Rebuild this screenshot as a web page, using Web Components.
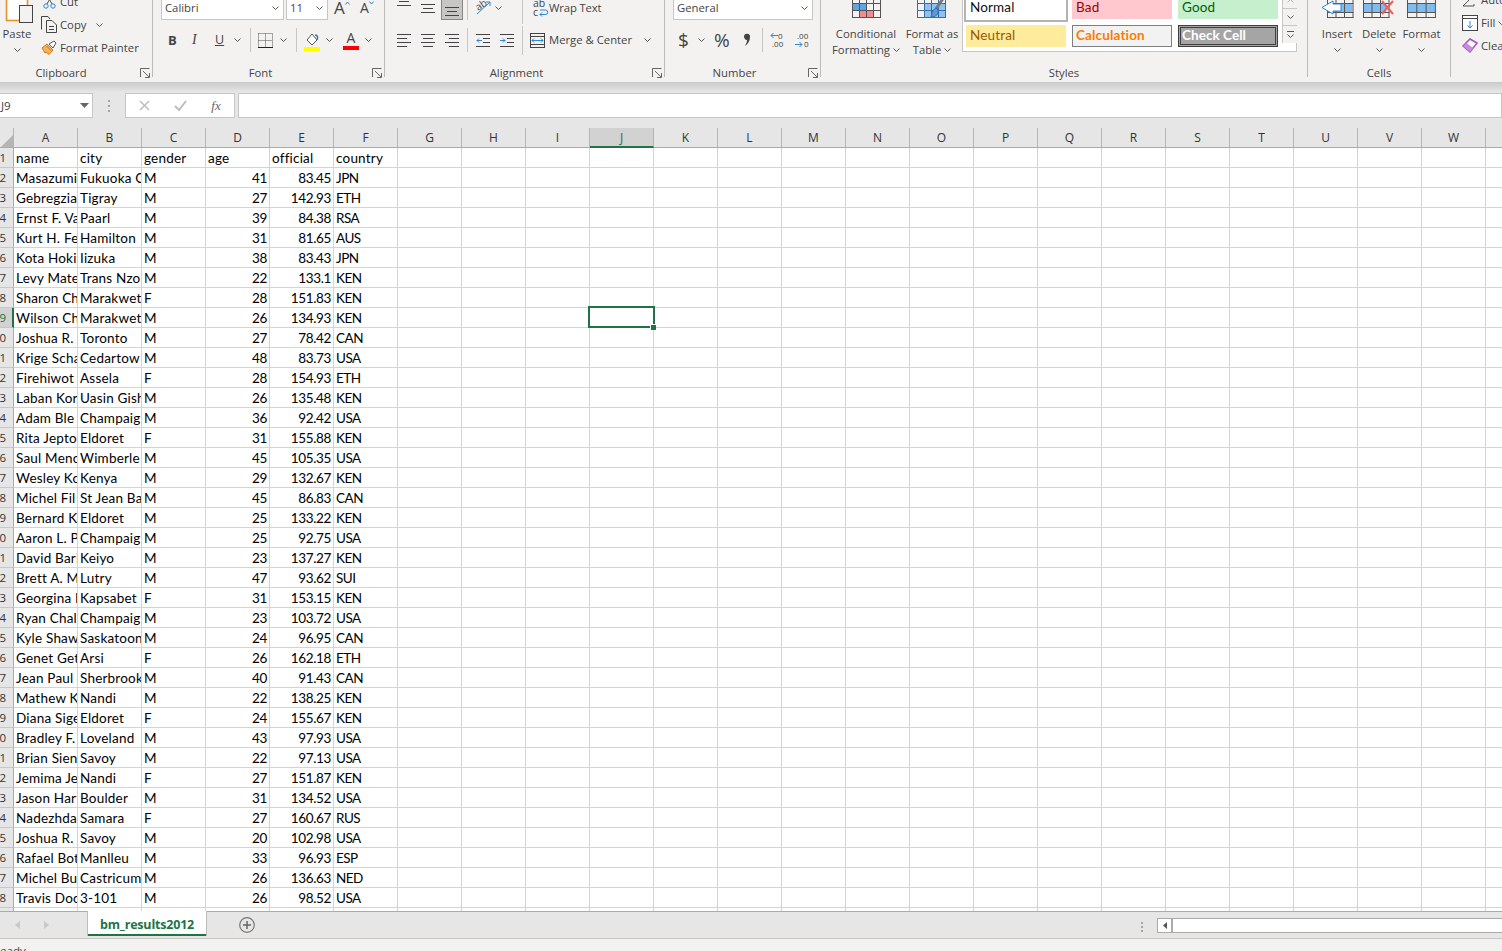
<!DOCTYPE html>
<html lang="en"><head><meta charset="utf-8"><title>bm_results2012</title>
<style>html,body{margin:0;padding:0;background:#fff;overflow:hidden}</style></head>
<body><x-app></x-app>
<script>
const s=(w,h,inner,st='')=>`<svg width="${w}" height="${h}" viewBox="0 0 ${w} ${h}" style="display:block;flex:none;overflow:visible;${st}">${inner}</svg>`;
const chev=s(7,4,'<path d="M.5.5 3.5 3.5 6.5.5" fill="none" stroke="#555"/>');
function row(start,items,cls='row',style=''){let p=start;return `<div class="${cls}" style="${style}">`+items.map(([x,w,h,st=''])=>{const m=x-p;p=x+w;return `<span class="i" style="margin-left:${m}px;width:${w}px;${st}">${h}</span>`}).join('')+`</div>`}
const lines=(arr)=>arr.map(([x1,x2,y])=>`<path d="M${x1} ${y}.5H${x2}" stroke="#444"/>`).join('');
const gridIc=(w,cols,rowsY,cw,extra='',stroke='#555')=>{let o='';for(let i=0;i<=cols;i++)o+=`<path d="M${i*cw+.5} ${rowsY[0]}V${rowsY[rowsY.length-1]+1}" stroke="${stroke}"/>`;rowsY.forEach(y=>o+=`<path d="M0 ${y+.5}H${cols*cw+1}" stroke="${stroke}"/>`);return o+extra};

class XGroup extends HTMLElement{
  constructor(){super();const r=this.attachShadow({mode:'open'});
    const lm=this.getAttribute('lm')||0,launch=this.hasAttribute('launcher');
    r.innerHTML=`<style>
    :host{display:flex;flex-direction:column;flex:none;height:82px;box-sizing:border-box;background:linear-gradient(#bdbbb9,#bdbbb9) right top/1px 77px no-repeat;overflow:hidden}
    .body{height:64px;flex:none;display:flex;flex-direction:column;justify-content:flex-end;overflow:hidden}
    .foot{height:18px;display:flex;align-items:center;padding-right:1px}
    .label{flex:1;text-align:center;margin-left:${lm}px;padding-right:${launch?4:0}px;line-height:18px;color:#444}
    svg{display:block;margin-right:2px;flex:none}
    </style><div class="body"><slot></slot></div><div class="foot"><div class="label">${this.getAttribute('label')}</div>${launch?`<svg width="10" height="10" viewBox="0 0 10 10"><path d="M.5 9V.5H9.5M3 3 9 9M5 9.500H9.500V5" fill="none" stroke="#666"/></svg>`:''}</div>`;
  }
}
customElements.define('x-group',XGroup);

class XChip extends HTMLElement{
  constructor(){super();const r=this.attachShadow({mode:'open'});
    r.innerHTML=`<style>:host{display:flex;align-items:center;box-sizing:border-box;font:13.5px/18px Lato,"Liberation Sans",sans-serif;padding-left:4px;padding-bottom:2px;overflow:hidden;white-space:nowrap;letter-spacing:.15px}</style><slot></slot>`;
  }
}
customElements.define('x-chip',XChip);

class XRibbon extends HTMLElement{
  constructor(){super();const r=this.attachShadow({mode:'open'});
    const clip=`<x-group label="Clipboard" launcher lm="-14" style="width:153px">`+
      row(0,[
        [2,30,`<div class="col" style="width:30px">${s(30,30,`<rect x="4.500" y=".5" width="21" height="27" fill="#fff" stroke="#e8912d" stroke-width="1.600"/><path d="M11 6.500H23" stroke="#666"/><rect x="17.500" y="12.500" width="13" height="17" fill="#f3f2f1" stroke="#444"/>`)}<div style="margin-top:3px;line-height:16px">Paste</div><div style="height:16px;display:flex;align-items:center">${chev}</div></div>`],
        [41,110,`<div class="stack" style="margin-bottom:-1px">
          <div class="l">${s(16,16,`<circle cx="5" cy="12" r="2.200" fill="none" stroke="#2b88d8"/><circle cx="12" cy="12" r="2.200" fill="none" stroke="#2b88d8"/><path d="M6 10 11 1M11 10 6 1" stroke="#555" fill="none"/>`)}<span style="margin-left:3px">Cut</span></div>
          <div class="l">${s(16,17,`<path d="M.5 13.500V.5H7L9 3" fill="none" stroke="#444"/><path d="M5.500 4.500H11L15.500 9V16.500H5.500Z" fill="#f3f2f1" stroke="#444"/><path d="M8 10.500H13M8 13.500H13" stroke="#444"/>`)}<span style="margin-left:3px">Copy</span><span style="margin-left:10px">${chev}</span></div>
          <div class="l">${s(16,15,`<path d="M1 8 6 4 12 10 8 14.500 5 12 4 13Z" fill="#f2b15e" stroke="#d67a12"/><path d="M8 4 13 1 15 3 12 8Z" fill="#fff" stroke="#555"/><path d="M5.500 6 10 10.500" stroke="#d67a12"/>`)}<span style="margin-left:3px">Format Painter</span></div>
        </div>`]
      ],'row big')+`</x-group>`;

    const font=`<x-group label="Font" launcher style="width:232px">`+
      row(153,[
        [161,123,`<span class="comb"><span>Calibri</span>${chev}</span>`],
        [286,42,`<span class="comb" style="color:#5c2d91"><span>11</span>${chev}</span>`],
        [334,18,`<span style="font-size:17px;line-height:20px">A</span>${s(5,4,'<path d="M.5 3.500 2.500 1 4.500 3.500" fill="none" stroke="#2b88d8"/>','margin-top:-10px')}`],
        [360,17,`<span style="font-size:14px;line-height:20px">A</span>${s(5,4,'<path d="M.5.5 2.500 3 4.500.5" fill="none" stroke="#2b88d8"/>','margin-top:-10px')}`]
      ])+
      row(153,[
        [168,9,`<b style="font-size:13px;color:#444">B</b>`],
        [192,7,`<i style="font-family:'Liberation Serif',serif;font-size:14px">I</i>`],
        [215,9,`<span style="text-decoration:underline;font-size:12.500px">U</span>`],
        [234,7,chev],
        [250,1,`<span class="sep"></span>`],
        [258,15,s(15,15,`<path d="M.5.5H14.500M.5 7.500H14.500M.5.5V14M7.500.5V14M14.500.5V14" stroke="#555" stroke-dasharray="1 1" fill="none"/><path d="M0 14.500H15" stroke="#222"/>`)],
        [280,7,chev],
        [296,1,`<span class="sep"></span>`],
        [304,16,s(16,19,`<path d="M3 8 8 2 13 8 8 13Z" fill="#fff" stroke="#555"/><path d="M11 3C14 3 14 6 13 8" fill="none" stroke="#2b78c2" stroke-width="1.500"/><rect y="15" width="16" height="4" fill="#ff0"/>`,'margin-top:3px')],
        [326,7,chev],
        [343,16,`<span class="col" style="width:16px"><span style="font-size:14px;line-height:14px;height:14px">A</span><span style="width:16px;height:4px;background:#f00;margin-top:1px"></span></span>`,'margin-top:1px'],
        [365,7,chev]
      ])+`</x-group>`;

    const al=(type,yy=[0,4,8,12],w=14)=>{const short={l:[0,10],c:[2,12],r:[4,14]}[type];return s(w,13,yy.map((y,i)=>`<path d="M${i%2?short[0]:0} ${y}.5H${i%2?short[1]:w}" stroke="#444"/>`).join(''))};
    const align=`<x-group label="Alignment" launcher style="width:280px">`+
      row(385,[
        [397,14,s(14,12,lines([[0,14,0],[2,12,4],[0,14,8]]),'margin-top:-10px')],
        [421,14,s(14,12,lines([[0,14,2],[2,12,6],[0,14,10]]))],
        [441,22,`<span class="sel">${s(14,9,lines([[0,14,0],[2,12,4],[0,14,8]]))}</span>`],
        [467,1,`<span class="sep"></span>`],
        [475,17,s(17,17,`<text x="2" y="9" transform="rotate(-35 6 8)" font-size="10" fill="#444" font-family="Open Sans">ab</text><path d="M2 14 15 2M11 2H15V6" fill="none" stroke="#2b88d8"/>`)],
        [495,7,chev],
        [522,1,`<span class="sep" style="height:32px"></span>`],
        [533,68,`<span style="display:block;width:12px;height:18px;flex:none;line-height:9px;font-size:10.500px;white-space:pre">ab
c</span>${s(9,8,'<path d="M1 2H6.500A2 2 0 0 1 6.500 6.500H1M3 4.500 1 6.500 3 8.500" fill="none" stroke="#2b88d8"/>','margin:7px 0 0 -6px')}<span style="margin-left:1px;letter-spacing:-.15px">Wrap Text</span>`]
      ])+
      row(385,[
        [397,14,al('l')],[421,14,al('c')],[445,14,al('r')],
        [467,1,`<span class="sep"></span>`],
        [476,14,s(14,13,`<path d="M0 .5H14M7 4.500H14M7 8.500H14M0 12.500H14" stroke="#444"/><path d="M6 6.500H1M3 4.500 1 6.500 3 8.500" fill="none" stroke="#2b88d8"/>`)],
        [500,14,s(14,13,`<path d="M0 .5H14M7 4.500H14M7 8.500H14M0 12.500H14" stroke="#444"/><path d="M0 6.500H5M3 4.500 5 6.500 3 8.500" fill="none" stroke="#2b88d8"/>`)],
        [522,1,`<span class="sep" style="align-self:flex-start;height:29px"></span>`],
        [530,15,s(15,15,`<rect x=".5" y=".5" width="14" height="14" fill="none" stroke="#444"/><path d="M0 3.500H15M0 11.500H15" stroke="#444"/><path d="M2 7.500H13M4 5.500 2 7.500 4 9.500M11 5.500 13 7.500 11 9.500" fill="none" stroke="#2b88d8"/>`)],
        [549,85,`<span>Merge &amp; Center</span>`],
        [644,7,chev]
      ])+`</x-group>`;

    const num=`<x-group label="Number" launcher style="width:156px">`+
      row(665,[[673,140,`<span class="comb"><span>General</span>${chev}</span>`]])+
      row(665,[
        [678,11,`<span style="font-size:19px;line-height:20px">$</span>`],
        [698,7,chev],
        [714,18,`<span style="font-size:19px;line-height:20px">%</span>`],
        [743,8,s(8,14,`<path d="M1 3.500A3 3 0 1 1 7 4C7 8 5 11 2 13 3.500 10 4 9 4 7 2 7 1 5 1 3.500Z" fill="#444"/>`)],
        [762,1,`<span class="sep"></span>`],
        [770,16,s(16,16,`<text x="8" y="7" font-size="8" fill="#444" font-family="Open Sans">0</text><text x="2" y="15" font-size="8" fill="#444" font-family="Open Sans">.00</text><path d="M8 3.500H1M3.500 1 1 3.500 3.500 6" fill="none" stroke="#2b88d8"/>`)],
        [794,16,s(16,16,`<text x="3" y="7" font-size="8" fill="#444" font-family="Open Sans">.00</text><text x="10" y="15" font-size="8" fill="#444" font-family="Open Sans">0</text><path d="M1 12.500H8M5.500 10 8 12.500 5.500 15" fill="none" stroke="#2b88d8"/>`)]
      ])+`</x-group>`;

    const big=(ic,a,b,ch=true)=>`<div class="col" style="width:100%">${ic}<div style="margin-top:8px;line-height:16px;white-space:nowrap">${a}</div><div style="height:16px;line-height:16px;display:flex;align-items:center;gap:3px;white-space:nowrap">${b}${ch?chev:''}</div></div>`;
    const rows=[2,9,16,23];
    const condIc=s(29,24,`<rect x="7" y="-4" width="14" height="6" fill="#f38b8f"/><rect x="1" y="9" width="14" height="7" fill="#5ea4e6"/><rect x="8" y="16" width="14" height="7" fill="#f38b8f"/>`+gridIc(29,4,rows,7));
    const tblIc=s(31,24,`<rect x="7" y="9" width="21" height="14" fill="#8cc1f0"/>`+gridIc(29,4,rows,7,'','#3a6ea5')+`<path d="M29 0 19 15" stroke="#777" stroke-width="3"/><path d="M19 14C15 16 15 20 14 23 19 23 22 20 21 16Z" fill="#5b9bd5" stroke="#2b6cb0"/>`);
    const insIc=s(32,24,`<rect x="7" y="9" width="24" height="9" fill="#7fbcf0"/>`+`<g transform="translate(6 0)">`+gridIc(26,3,[2,9,18,23],8.500,'','#555')+`</g>`+`<path d="M12 7 1 13.500 12 20V17H20V10H12Z" fill="#fff" stroke="#2b88d8"/>`);
    const delIc=s(32,24,`<rect x="1" y="9" width="22" height="9" fill="#7fbcf0"/>`+gridIc(26,3,[2,9,18,23],8.500,'','#555')+`<path d="M19 7 30 20M30 7 19 20" stroke="#e8615e" stroke-width="2"/>`);
    const fmtIc=s(29,24,`<rect x="1" y="9" width="27" height="9" fill="#7fbcf0"/>`+gridIc(29,3,[2,9,18,23],9.300,'','#555'));
    const styles=`<x-group label="Styles" style="width:487px">`+
      row(821,[
        [826,80,big(condIc,'Conditional','Formatting')],
        [906,52,big(tblIc,'Format as','Table')],
        [962,335,`<div class="gallery">
          <div class="chips">
            <x-chip style="margin:0 -2px 1px;border:2px solid #b3b3b3;background:#fff;padding-bottom:4px;color:#111;height:26px;width:104px;align-self:end">Normal</x-chip>
            <x-chip style="background:#ffc7ce;color:#9c0006;height:21px;margin-bottom:4px;align-self:end;padding-bottom:3px">Bad</x-chip>
            <x-chip style="background:#c6efce;color:#006100;height:21px;margin-bottom:4px;align-self:end;padding-bottom:3px">Good</x-chip>
            <x-chip style="background:#ffeb9c;color:#9c5700;height:22px">Neutral</x-chip>
            <x-chip style="background:#f2f2f2;color:#fa7d00;border:1px solid #7f7f7f;font-weight:700;height:22px;padding-left:3px">Calculation</x-chip>
            <x-chip style="background:#a5a5a5;color:#fff;border:3px double #3f3f3f;font-weight:700;height:22px;padding-left:1px;padding-bottom:2px;letter-spacing:.05px">Check Cell</x-chip>
          </div>
          <div class="gs">
            <span style="height:16px">${s(7,4,'<path d="M.5 3.500 3.500.5 6.500 3.500" fill="none" stroke="#bbb"/>')}</span>
            <span style="height:17px">${chev}</span>
            <span style="height:17px;flex-direction:column;gap:2px;border-bottom:0">${s(7,1,'<path d="M0 .5H7" stroke="#555"/>')}${chev}</span>
          </div>
        </div>`,'margin-bottom:6px;align-self:flex-end']
      ],'row big')+`</x-group>`;

    const cells=`<x-group label="Cells" style="width:143px">`+
      row(1308,[
        [1321,32,big(insIc,'Insert','',true)],
        [1363,32,big(delIc,'Delete','',true)],
        [1407,29,big(fmtIc,'Format','',true)]
      ],'row big')+`</x-group>`;

    const edit=`<x-group label="" style="flex:1;min-width:60px;background:none">`+
      row(1451,[[1462,60,`<div class="stack" style="margin-bottom:1px">
        <div class="l">${s(16,14,'<path d="M1 1H12V3M1 1 7 7 1 13H12V11" fill="none" stroke="#555"/>')}<span style="margin-left:3px">AutoSum</span></div>
        <div class="l">${s(16,16,'<rect x=".5" y=".5" width="15" height="15" fill="#fff" stroke="#444"/><path d="M0 3.500H16" stroke="#444"/><path d="M8 6V13M5.500 10.500 8 13 10.500 10.500" fill="none" stroke="#2b88d8"/>')}<span style="margin-left:3px">Fill</span><span style="margin-left:3px">${chev}</span></div>
        <div class="l">${s(16,15,'<path d="M1 8 8 1 15 5 8 14Z" fill="#fff" stroke="#a64dbf" stroke-width="1.500"/><path d="M1 8 8 14 11 10 4.500 5Z" fill="#c78adf"/>')}<span style="margin-left:3px">Clear</span></div>
      </div>`]],'row big')+`</x-group>`;

    r.innerHTML=`<style>
    :host{display:flex;height:82px;flex:none;background:#f3f2f1;overflow:hidden;font:11.300px/16px "Open Sans","Liberation Sans",sans-serif;color:#444}
    .row{display:flex;align-items:center;height:32px;flex:none}
    .row+.row{margin-bottom:8px}
    .row.big{height:64px;align-items:flex-end;padding-bottom:6px;box-sizing:border-box}
    .i{display:flex;align-items:center;flex:none;white-space:nowrap}
    .col{display:flex;flex-direction:column;align-items:center;flex:none}
    .stack{display:flex;flex-direction:column}
    .l{display:flex;align-items:center;height:23px;white-space:nowrap}
    .comb{display:flex;align-items:center;justify-content:space-between;box-sizing:border-box;width:100%;height:24px;background:#fff;border:1px solid #c8c6c4;padding:0 4px 0 3px;color:#444}
    .sep{display:block;width:1px;height:24px;background:#c8c6c4;flex:none}
    .sel{display:flex;align-items:flex-end;justify-content:center;box-sizing:border-box;width:22px;height:24px;background:#c8c6c4;border:1px solid #8a8886;padding-bottom:3px}
    .gallery{display:flex;background:#fff;border:1px solid #c8c6c4;box-sizing:border-box;width:335px;height:60px;padding-left:3px;align-self:flex-end;margin-top:-8px}
    .chips{display:grid;grid-template-columns:100px 100px 100px;column-gap:6px;grid-template-rows:1fr 22px;row-gap:2px;padding-bottom:4px;width:312px;flex:none}
    .gs{display:flex;flex-direction:column;width:15px;margin-left:4px;flex:none;box-sizing:border-box}
    .gs span{display:flex;align-items:center;justify-content:center;box-sizing:border-box;border:1px solid #c8c6c4;border-top:0;border-right:0;background:#f3f2f1}
    </style>${clip}${font}${align}${num}${styles}${cells}${edit}`;
  }
}
customElements.define('x-ribbon',XRibbon);

class XFormula extends HTMLElement{
  constructor(){super();const r=this.attachShadow({mode:'open'});
    r.innerHTML=`<style>
    :host{display:block;height:46px;flex:none;background:linear-gradient(#c9c9c9,#e6e6e6 10px);box-sizing:border-box;padding-top:11px;font:11.500px "Open Sans","Liberation Sans",sans-serif;color:#444}
    .b{display:flex;height:25px;align-items:stretch}
    .box{background:#fff;border:1px solid #c6c6c6;box-sizing:border-box;display:flex;align-items:center;flex:none}
    .name{width:93px;border-left:0;justify-content:space-between;padding-right:3px}
    .dots{width:32px;display:flex;flex-direction:column;align-items:center;justify-content:center;gap:3px;flex:none}
    .dots i{width:2px;height:2px;background:#a6a6a6}
    .fx{width:110px;margin-right:3px}
    .fx span{display:flex;justify-content:center;flex:none}
    .in{flex:1}
    </style><div class="b">
      <div class="box name"><span style="margin-left:1px">J9</span>${s(9,5,'<path d="M0 0H9L4.500 5Z" fill="#666"/>')}</div>
      <div class="dots"><i></i><i></i><i></i></div>
      <div class="box fx">
        <span style="width:36px">${s(11,11,'<path d="M1 1 10 10M10 1 1 10" stroke="#bdbdbd" stroke-width="1.500"/>')}</span>
        <span style="width:36px">${s(13,11,'<path d="M1 6 5 10 12 1" fill="none" stroke="#bdbdbd" stroke-width="2"/>')}</span>
        <span style="width:36px;font:italic 13px 'Liberation Serif',serif;color:#666">fx</span>
      </div>
      <div class="box in"></div>
    </div>`;
  }
}
customElements.define('x-formula',XFormula);

const DATA=`name|city|gender|age|official|country
Masazumi|Fukuoka C|M|41|83.45|JPN
Gebregzia|Tigray|M|27|142.93|ETH
Ernst F. Va|Paarl|M|39|84.38|RSA
Kurt H. Fe|Hamilton|M|31|81.65|AUS
Kota Hoki|Iizuka|M|38|83.43|JPN
Levy Mate|Trans Nzo|M|22|133.1|KEN
Sharon Ch|Marakwet|F|28|151.83|KEN
Wilson Ch|Marakwet|M|26|134.93|KEN
Joshua R.|Toronto|M|27|78.42|CAN
Krige Scha|Cedartow|M|48|83.73|USA
Firehiwot|Assela|F|28|154.93|ETH
Laban Kor|Uasin Gish|M|26|135.48|KEN
Adam Ble|Champaig|M|36|92.42|USA
Rita Jepto|Eldoret|F|31|155.88|KEN
Saul Menc|Wimberle|M|45|105.35|USA
Wesley Kc|Kenya|M|29|132.67|KEN
Michel Fil|St Jean Ba|M|45|86.83|CAN
Bernard K|Eldoret|M|25|133.22|KEN
Aaron L. P|Champaig|M|25|92.75|USA
David Bari|Keiyo|M|23|137.27|KEN
Brett A. M|Lutry|M|47|93.62|SUI
Georgina I|Kapsabet|F|31|153.15|KEN
Ryan Chal|Champaig|M|23|103.72|USA
Kyle Shaw|Saskatoon|M|24|96.95|CAN
Genet Get|Arsi|F|26|162.18|ETH
Jean Paul|Sherbrook|M|40|91.43|CAN
Mathew K|Nandi|M|22|138.25|KEN
Diana Sige|Eldoret|F|24|155.67|KEN
Bradley F.|Loveland|M|43|97.93|USA
Brian Sien|Savoy|M|22|97.13|USA
Jemima Je|Nandi|F|27|151.87|KEN
Jason Hart|Boulder|M|31|134.52|USA
Nadezhda|Samara|F|27|160.67|RUS
Joshua R.|Savoy|M|20|102.98|USA
Rafael Bot|Manlleu|M|33|96.93|ESP
Michel Bu|Castricum|M|26|136.63|NED
Travis Doc|3-101|M|26|98.52|USA`.split('\n').map(l=>l.split('|'));

class XSheet extends HTMLElement{
  constructor(){super();const r=this.attachShadow({mode:'open'});
    const letters='ABCDEFGHIJKLMNOPQRSTUVW'.split('');
    let h=`<div class="corner">${s(13,20,'<path d="M13 7V19H1Z" fill="#b5b5b5"/>')}</div>`;
    letters.forEach(l=>h+=`<div class="ch${l==='J'?' on':''}">${l}</div>`);
    h+=`<div class="ch"></div>`;
    for(let n=1;n<=39;n++){
      const d=DATA[n-1]||[];
      h+=`<div class="rh${n===9?' on':''}"><span>${n}</span></div>`;
      for(let c=0;c<24;c++){
        const v=d[c]??'';
        const num=n>1&&(c===3||c===4);
        const code=n>1&&c===5;
        const word=c<2||n===1;
        h+=`<div class="c${num?' n':''}${code?' k':''}${word?' w':''}">${v}</div>`;
      }
    }
    r.innerHTML=`<style>
    :host{display:block;flex:1;min-height:0;position:relative;overflow:hidden;background:#fff;color:#000}
    .g{display:grid;grid-template-columns:14px repeat(23,64px) 64px;grid-auto-rows:20px}
    .corner{background:#e6e6e6;border-right:1px solid #b5b5b5;border-bottom:1px solid #ababab;box-sizing:border-box}
    .ch{background:#e6e6e6;border-right:1px solid #b5b5b5;border-bottom:1px solid #ababab;box-sizing:border-box;text-align:center;font:12px/19px "Open Sans","Liberation Sans",sans-serif;color:#333}
    .ch.on{background:#d2d2d2;border-bottom:2px solid #217346;color:#217346}
    .rh{background:#e6e6e6;border-right:1px solid #ababab;border-bottom:1px solid #c6c6c6;box-sizing:border-box;display:flex;justify-content:flex-end;padding-right:7px;font:11.500px/19px "Open Sans","Liberation Sans",sans-serif;color:#333;overflow:hidden}
    .rh.on{background:#d2d2d2;border-right:2px solid #217346;padding-right:6px;color:#217346}
    .c{border-right:1px solid #d4d4d4;border-bottom:1px solid #d4d4d4;box-sizing:border-box;overflow:hidden;white-space:nowrap;padding:0 0 0 2px;font:13.500px/21px Lato,"Liberation Sans",sans-serif}
    .c.w{letter-spacing:.2px}
    .c.n{text-align:right;padding:0 2px 0 0;letter-spacing:-.35px}
    .c.k{letter-spacing:-.5px}
    .sel{position:absolute;left:588px;top:178px;width:67px;height:22px;border:2px solid #217346;box-sizing:border-box}
    .sel i{position:absolute;right:-3px;bottom:-4px;width:5px;height:5px;background:#217346;border:1px solid #fff;border-right:0;border-bottom:0}
    </style><div class="g">${h}</div><div class="sel"><i></i></div>`;
  }
}
customElements.define('x-sheet',XSheet);

class XTabs extends HTMLElement{
  constructor(){super();const r=this.attachShadow({mode:'open'});
    r.innerHTML=`<style>
    :host{display:flex;height:28px;flex:none;box-sizing:border-box;background:#e6e6e6;border-top:1px solid #ababab;border-bottom:1px solid #c6c6c6;align-items:flex-start;font:12.500px "Open Sans","Liberation Sans",sans-serif}
    .nav{display:flex;width:88px;height:26px;align-items:center;flex:none}
    .tab{width:118px;height:25px;margin-top:-1px;padding-top:3px;box-sizing:border-box;background:#fff;border:solid #217346;border-width:0 0 2px;box-shadow:-1px 0 0 #bdbdbd,1px 0 0 #bdbdbd;display:flex;align-items:center;justify-content:center;color:#217346;font-weight:700;flex:none;white-space:nowrap;letter-spacing:-.2px}
    .add{margin-left:33px;margin-top:5px;flex:none}
    .dots{margin-left:auto;width:5px;margin-top:10px;display:flex;flex-direction:column;gap:2px;align-items:center;flex:none}
    .dots i{width:2px;height:2px;background:#a6a6a6}
    .sb{width:345px;height:15px;margin:6px 0 0 13px;box-sizing:border-box;background:#fff;border:1px solid #ababab;border-right:0;display:flex;flex:none}
    .btn{width:15px;border-right:2px solid #ababab;display:flex;align-items:center;justify-content:center;box-sizing:border-box}
    </style>
    <div class="nav">${s(5,8,'<path d="M5 0V8L0 4Z" fill="#c8c8c8"/>','margin-left:15px')}${s(5,8,'<path d="M0 0V8L5 4Z" fill="#c8c8c8"/>','margin-left:24px')}</div>
    <div class="tab">bm_results2012</div>
    <div class="add">${s(16,16,'<circle cx="8" cy="8" r="7.300" fill="none" stroke="#777" stroke-width="1.200"/><path d="M8 4V12M4 8H12" stroke="#666" stroke-width="1.500"/>')}</div>
    <div class="dots"><i></i><i></i><i></i></div>
    <div class="sb"><div class="btn">${s(4,7,'<path d="M4 0V7L0 3.500Z" fill="#555"/>')}</div></div>`;
  }
}
customElements.define('x-tabs',XTabs);

class XStatus extends HTMLElement{
  constructor(){super();const r=this.attachShadow({mode:'open'});
    r.innerHTML=`<style>:host{display:block;height:12px;flex:none;background:#f3f2f1;overflow:hidden;font:11.500px/16px "Open Sans","Liberation Sans",sans-serif;color:#444;padding:4px 0 0 0;box-sizing:border-box}div{margin-left:-7px}</style><div>Ready</div>`;
  }
}
customElements.define('x-status',XStatus);

class XApp extends HTMLElement{
  constructor(){super();const r=this.attachShadow({mode:'open'});
    r.innerHTML=`<style>:host{display:flex;flex-direction:column;width:1502px;height:951px;overflow:hidden}</style><x-ribbon></x-ribbon><x-formula></x-formula><x-sheet></x-sheet><x-tabs></x-tabs><x-status></x-status>`;
  }
}
customElements.define('x-app',XApp);
</script>
</body></html>
